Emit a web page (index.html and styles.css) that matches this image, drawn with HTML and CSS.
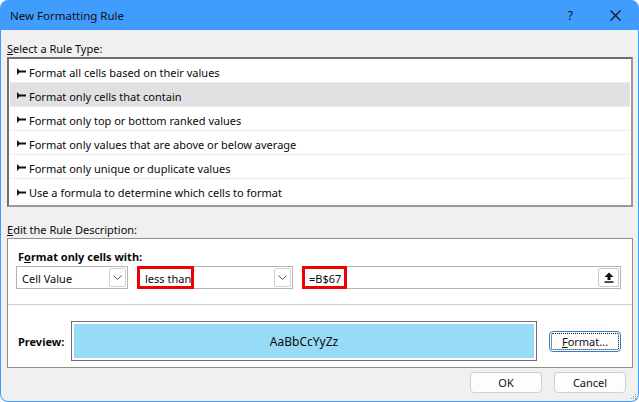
FILE: index.html
```html
<!DOCTYPE html>
<html>
<head>
<meta charset="utf-8">
<link rel="stylesheet" href="styles.css">
</head>
<body>
<div class="window">
  <div class="titlebar">
    <span class="title">New Formatting Rule</span>
    <div class="ctrls">
      <span class="help">?</span>
      <svg class="close" width="11" height="11" viewBox="0 0 11 11"><path d="M0.5 0.5 L10.5 10.5 M10.5 0.5 L0.5 10.5" stroke="#111" stroke-width="1.1" fill="none"/></svg>
    </div>
  </div>
  <div class="content">
    <div class="label first"><u>S</u>elect a Rule Type:</div>
    <ul class="rules">
      <li><svg class="bul" width="9" height="7" viewBox="0 0 9 7"><path d="M0 0 L2.5 2.5 L9 2.5 L9 4.5 L2.5 4.5 L0 7 Z" fill="#111"/></svg>Format all cells based on their values</li>
      <li class="sel"><svg class="bul" width="9" height="7" viewBox="0 0 9 7"><path d="M0 0 L2.5 2.5 L9 2.5 L9 4.5 L2.5 4.5 L0 7 Z" fill="#111"/></svg>Format only cells that contain</li>
      <li><svg class="bul" width="9" height="7" viewBox="0 0 9 7"><path d="M0 0 L2.5 2.5 L9 2.5 L9 4.5 L2.5 4.5 L0 7 Z" fill="#111"/></svg>Format only top or bottom ranked values</li>
      <li><svg class="bul" width="9" height="7" viewBox="0 0 9 7"><path d="M0 0 L2.5 2.5 L9 2.5 L9 4.5 L2.5 4.5 L0 7 Z" fill="#111"/></svg>Format only values that are above or below average</li>
      <li><svg class="bul" width="9" height="7" viewBox="0 0 9 7"><path d="M0 0 L2.5 2.5 L9 2.5 L9 4.5 L2.5 4.5 L0 7 Z" fill="#111"/></svg>Format only unique or duplicate values</li>
      <li class="last"><svg class="bul" width="9" height="7" viewBox="0 0 9 7"><path d="M0 0 L2.5 2.5 L9 2.5 L9 4.5 L2.5 4.5 L0 7 Z" fill="#111"/></svg>Use a formula to determine which cells to format</li>
    </ul>
    <div class="label second"><u>E</u>dit the Rule Description:</div>
    <div class="desc">
      <div class="desc-top">
        <div class="bold">F<u>o</u>rmat only cells with:</div>
        <div class="row">
          <div class="combo c1">
            <span class="ctext">Cell Value</span>
            <span class="arrow"><svg width="9" height="5" viewBox="0 0 9 5"><path d="M0.5 0.5 L4.5 4.5 L8.5 0.5" stroke="#555" fill="none" stroke-width="1"/></svg></span>
          </div>
          <div class="combo c2">
            <span class="ctext">less than</span>
            <span class="arrow"><svg width="9" height="5" viewBox="0 0 9 5"><path d="M0.5 0.5 L4.5 4.5 L8.5 0.5" stroke="#555" fill="none" stroke-width="1"/></svg></span>
            <span class="hl hl1"></span>
          </div>
          <div class="combo c3">
            <span class="ctext">=B$67</span>
            <span class="upbtn"><svg width="10" height="11" viewBox="0 0 10 11"><path d="M5 0.5 L9.5 5 L6.5 5 L6.5 8 L3.5 8 L3.5 5 L0.5 5 Z" fill="#111"/><rect x="0.5" y="9.3" width="9" height="1.5" fill="#111"/></svg></span>
            <span class="hl hl2"></span>
          </div>
        </div>
      </div>
      <div class="preview-row">
        <div class="bold plabel">Preview:</div>
        <div class="pbox"><div class="pfill">AaBbCcYyZz</div></div>
        <button class="btn fmt"><span class="dots"><u>F</u>ormat...</span></button>
      </div>
    </div>
    <div class="buttons">
      <button class="btn">OK</button>
      <button class="btn">Cancel</button>
    </div>
  </div>
  <svg class="grip" width="6" height="6" viewBox="0 0 6 6"><g fill="#9a9a9a"><rect x="4" y="0" width="1" height="1"/><rect x="2" y="2" width="1" height="1"/><rect x="4" y="2" width="1" height="1"/><rect x="0" y="4" width="1" height="1"/><rect x="2" y="4" width="1" height="1"/><rect x="4" y="4" width="1" height="1"/></g></svg>
</div>
</body>
</html>
```
FILE: styles.css
```css
* { box-sizing: border-box; }
html, body { margin: 0; padding: 0; background: #ffffff; }
body {
  font-family: "Noto Sans", "Open Sans", sans-serif;
  font-size: 11px;
  color: #0a0a0a;
  width: 639px;
  height: 402px;
  overflow: hidden;
}
.window {
  position: relative;
  width: 639px;
  height: 402px;
  background: #f0f0f0;
  border: 1px solid #3f9cfd;
  border-top: none;
  border-radius: 8px;
  overflow: hidden;
}
.titlebar {
  height: 30px;
  background: #409dfe;
  display: flex;
  align-items: center;
  justify-content: space-between;
  padding: 1px 17px 0 9px;
}
.title { font-size: 11.5px; color: #111; }
.ctrls { display: flex; align-items: center; gap: 37px; }
.help { font-size: 12px; color: #111; }
.close { display: block; }
.content { padding: 0 5px 0 6px; }
.label { height: 16px; line-height: 16px; padding-top: 1px; }
.label.first { margin-top: 10px; margin-bottom: 1px; }
.label.second { margin-top: 14px; margin-bottom: 1px; }
.rules {
  list-style: none;
  margin: 0;
  padding: 0 1px 2px 1px;
  height: 150px;
  background: #fff;
  border: 2px solid #7a7a7a;
  border-color: #6e6e6e #9a9a9a #9a9a9a #6e6e6e;
}
.rules li {
  height: 24px;
  display: flex;
  align-items: center;
  padding-left: 7px;
  padding-top: 3px;
  border-bottom: 1px solid #ececec;
}
.rules li.last { border-bottom: none; }
.rules li.sel { background: #e1e1e4; }
.bul { margin-right: 3px; flex: none; margin-top: -1px; }
.desc {
  background: #fff;
  border: 1px solid #8f8f8f;
  height: 130px;
}
.desc-top {
  padding: 8px 11px 16px 8px;
  border-bottom: 1px solid #cfcfcf;
  height: 66px;
}
.bold { font-weight: bold; }
.desc-top .bold { padding-left: 2px; height: 16px; line-height: 16px; padding-top: 2px; }
.row { display: flex; gap: 9px; margin-top: 3px; }
.combo {
  position: relative;
  height: 23px;
  border: 1px solid #b4b4b4;
  background: #fff;
  display: flex;
  align-items: center;
  justify-content: space-between;
  padding: 0 1px 0 5px;
}
.ctext { padding-top: 1px; }
.c1 { width: 112px; }
.c2 { width: 156px; padding-left: 7px; }
.c3 { flex: 1; padding-left: 6px; }
.arrow, .upbtn {
  width: 17px;
  height: 19px;
  border: 1px solid #d0d0d0;
  border-radius: 2px;
  display: flex;
  align-items: center;
  justify-content: center;
  background: #fff;
}
.upbtn { width: 21px; border-color: #c8c8c8; }
.hl {
  position: absolute;
  top: -1px;
  left: -1px;
  bottom: -1px;
  border: 3px solid #f00000;
}
.hl1 { width: 57px; }
.hl2 { width: 45px; }
.preview-row {
  display: flex;
  align-items: center;
  padding: 16px 11px 0 10px;
}
.plabel { width: 53px; padding-top: 1px; }
.pbox {
  width: 466px;
  height: 40px;
  border: 1px solid #6e6e6e;
  padding: 2px;
  background: #fff;
}
.pfill {
  height: 100%;
  background: #97dbf7;
  display: flex;
  align-items: center;
  justify-content: center;
  font-size: 12px;
  padding-top: 1px;
}
.btn {
  font-family: inherit;
  font-size: 11px;
  color: #111;
  background: #fdfdfd;
  border: 1px solid #d0d0d0;
  border-radius: 4px;
  height: 21px;
  width: 72px;
  padding: 0;
}
.fmt {
  margin-left: auto;
  width: 72px;
  height: 21px;
  border: 1px solid #2b7fd6;
  padding: 1px;
}
.dots {
  display: flex;
  align-items: center;
  justify-content: center;
  height: 100%;
  border: 1px dotted #111;
  border-radius: 2px;
}
.buttons {
  display: flex;
  justify-content: flex-end;
  gap: 12px;
  margin-top: 4px;
  padding-right: 7px;
}
.grip { position: absolute; right: 1px; bottom: 1px; }
```
